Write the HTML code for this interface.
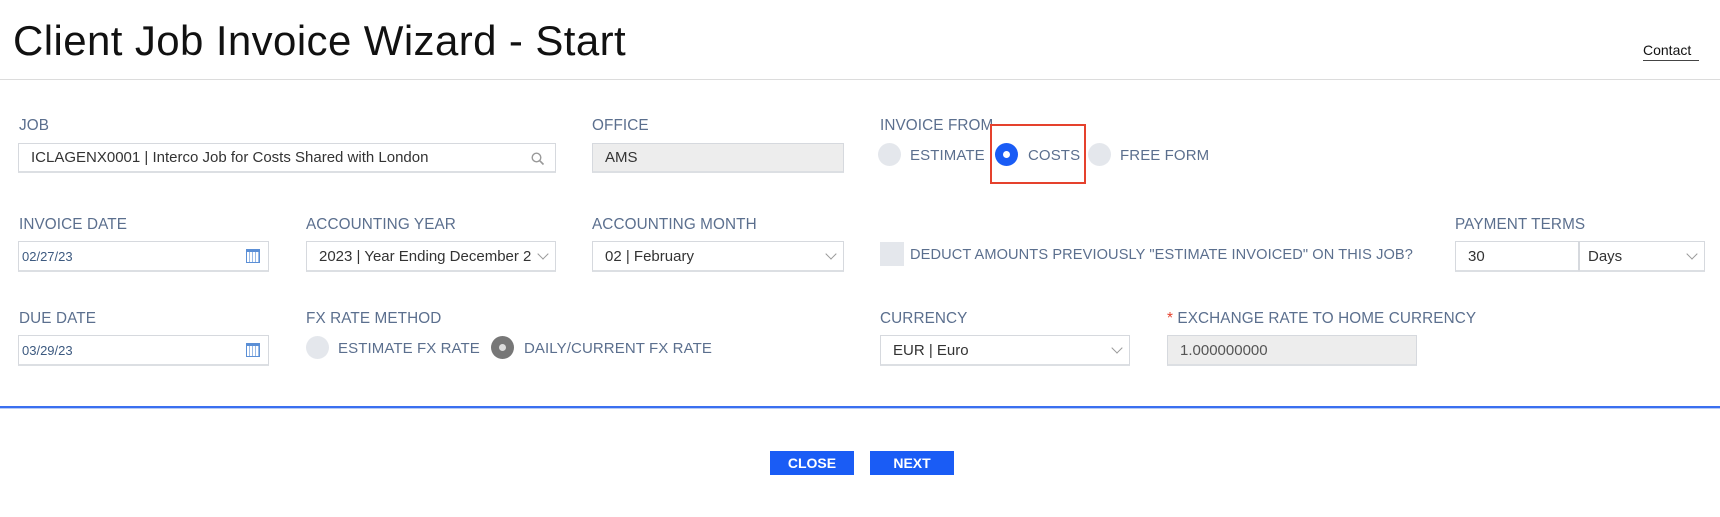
<!DOCTYPE html>
<html><head><meta charset="utf-8"><style>
*{box-sizing:border-box;margin:0;padding:0}
body{width:1720px;height:517px;background:#fff;font-family:"Liberation Sans",sans-serif;position:relative;overflow:hidden}
.a{position:absolute}
.lbl{position:absolute;font-size:15.3px;color:#5b6f8e;letter-spacing:0.1px;white-space:nowrap}
.inp{position:absolute;border:1px solid #d6d9de;border-bottom:2px solid #dcdfe3;background:#fff;font-size:15px;color:#333;padding-left:12px;display:flex;align-items:center;white-space:nowrap;overflow:hidden}
.gray{background:#ededed}
.rad{position:absolute;width:23px;height:23px;border-radius:50%;background:#e4e7ec}
.chev{position:absolute;right:8px;top:8px;width:8px;height:8px;border-right:1.5px solid #999;border-bottom:1.5px solid #999;transform:rotate(45deg)}
.btn{position:absolute;background:#1a5cf5;color:#fff;font-size:14px;font-weight:bold;display:flex;align-items:center;justify-content:center}
.cal{position:absolute;right:8px;top:7px;width:14px;height:14px;border:1.5px solid #5b8fd6;border-top-width:3px;background:repeating-linear-gradient(90deg,#fff 0 2px,#9bbbe6 2px 3px)}
</style></head><body>
<div class="a" style="left:13px;top:17px;font-size:42px;color:#111;letter-spacing:0.4px">Client Job Invoice Wizard - Start</div>
<div class="a" style="left:1643px;top:42px;font-size:14px;color:#111">Contact</div>
<div class="a" style="left:1643px;top:60px;width:56px;height:1px;background:#444"></div>
<div class="a" style="left:0;top:79px;width:1720px;height:1px;background:#dcdcdc"></div>

<div class="lbl" style="left:19px;top:117px">JOB</div>
<div class="inp" style="left:18px;top:143px;width:538px;height:30px">ICLAGENX0001 | Interco Job for Costs Shared with London
<svg class="a" style="right:10px;top:8px" width="14" height="14" viewBox="0 0 14 14"><circle cx="5.5" cy="5.5" r="4.3" fill="none" stroke="#999" stroke-width="1.4"/><path d="M8.6 8.6L12.5 12.5" stroke="#999" stroke-width="1.6"/></svg></div>
<div class="lbl" style="left:592px;top:117px">OFFICE</div>
<div class="inp gray" style="left:592px;top:143px;width:252px;height:30px">AMS</div>

<div class="lbl" style="left:880px;top:117px">INVOICE FROM</div>
<div class="rad" style="left:878px;top:143px"></div>
<div class="lbl" style="left:910px;top:147px;font-size:15px">ESTIMATE</div>
<div class="rad" style="left:995px;top:143px;background:#1a5cf5"></div>
<div class="a" style="left:1003px;top:151px;width:7px;height:7px;border-radius:50%;background:#fff"></div>
<div class="lbl" style="left:1028px;top:147px;font-size:15px">COSTS</div>
<div class="rad" style="left:1088px;top:143px"></div>
<div class="lbl" style="left:1120px;top:147px;font-size:15px">FREE FORM</div>
<div class="a" style="left:990px;top:124px;width:96px;height:60px;border:2px solid #e5412d"></div>

<div class="lbl" style="left:19px;top:216px">INVOICE DATE</div>
<div class="inp" style="left:18px;top:241px;width:251px;height:31px;padding-left:3px;font-size:13px;color:#3d5a80">02/27/23<div class="cal"></div></div>
<div class="lbl" style="left:306px;top:216px">ACCOUNTING YEAR</div>
<div class="inp" style="left:306px;top:241px;width:250px;height:31px">2023 | Year Ending December 2<div class="chev"></div></div>
<div class="lbl" style="left:592px;top:216px">ACCOUNTING MONTH</div>
<div class="inp" style="left:592px;top:241px;width:252px;height:31px">02 | February<div class="chev"></div></div>
<div class="a" style="left:880px;top:242px;width:24px;height:24px;background:#e4e7ec"></div>
<div class="lbl" style="left:910px;top:247px;font-size:14.6px">DEDUCT AMOUNTS PREVIOUSLY "ESTIMATE INVOICED" ON THIS JOB?</div>
<div class="lbl" style="left:1455px;top:216px">PAYMENT TERMS</div>
<div class="inp" style="left:1455px;top:241px;width:124px;height:31px">30</div>
<div class="inp" style="left:1579px;top:241px;width:126px;height:31px;padding-left:8px">Days<div class="chev"></div></div>

<div class="lbl" style="left:19px;top:310px">DUE DATE</div>
<div class="inp" style="left:18px;top:335px;width:251px;height:31px;padding-left:3px;font-size:13px;color:#3d5a80">03/29/23<div class="cal"></div></div>
<div class="lbl" style="left:306px;top:310px">FX RATE METHOD</div>
<div class="rad" style="left:306px;top:336px"></div>
<div class="lbl" style="left:338px;top:340px;font-size:15px">ESTIMATE FX RATE</div>
<div class="rad" style="left:491px;top:336px;background:#777"></div>
<div class="a" style="left:499px;top:344px;width:7px;height:7px;border-radius:50%;background:#ddd"></div>
<div class="lbl" style="left:524px;top:340px;font-size:15px">DAILY/CURRENT FX RATE</div>
<div class="lbl" style="left:880px;top:310px">CURRENCY</div>
<div class="inp" style="left:880px;top:335px;width:250px;height:31px">EUR | Euro<div class="chev"></div></div>
<div class="lbl" style="left:1167px;top:310px"><span style="color:#e5412d">*</span> EXCHANGE RATE TO HOME CURRENCY</div>
<div class="inp gray" style="left:1167px;top:335px;width:250px;height:31px;color:#555">1.000000000</div>

<div class="a" style="left:0;top:406px;width:1720px;height:2px;background:#3a6ff0"></div>
<div class="a" style="left:0;top:408px;width:1720px;height:1px;background:#b8cbf5"></div>

<div class="btn" style="left:770px;top:451px;width:84px;height:24px">CLOSE</div>
<div class="btn" style="left:870px;top:451px;width:84px;height:24px">NEXT</div>
</body></html>
